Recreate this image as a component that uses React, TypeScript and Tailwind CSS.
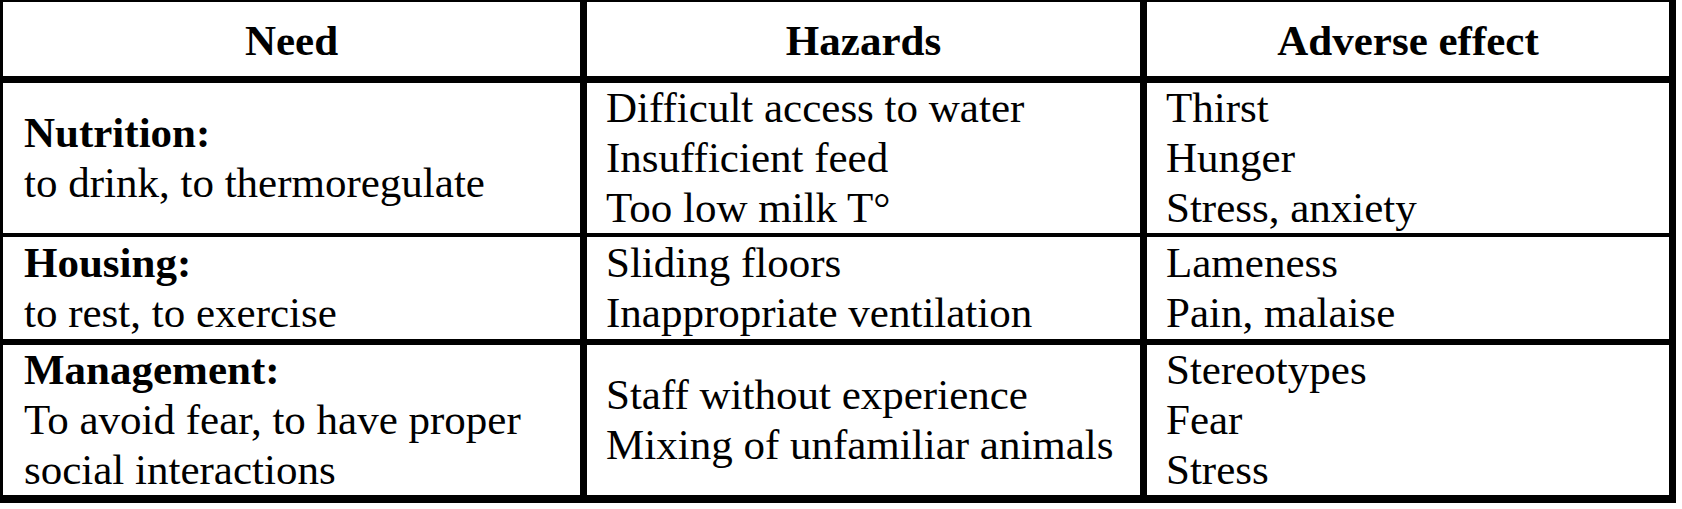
type Row = {
  title: string;
  need: string[];
  hazards: string[];
  effects: string[];
  height: string;
  border: string;
};

const rows: Row[] = [
  {
    title: "Nutrition:",
    need: ["to drink, to thermoregulate"],
    hazards: ["Difficult access to water", "Insufficient feed", "Too low milk T°"],
    effects: ["Thirst", "Hunger", "Stress, anxiety"],
    height: "h-[154px]",
    border: "border-b-[4px]",
  },
  {
    title: "Housing:",
    need: ["to rest, to exercise"],
    hazards: ["Sliding floors", "Inappropriate ventilation"],
    effects: ["Lameness", "Pain, malaise"],
    height: "h-[108px]",
    border: "border-b-[6px]",
  },
  {
    title: "Management:",
    need: ["To avoid fear, to have proper", "social interactions"],
    hazards: ["Staff without experience", "Mixing of unfamiliar animals"],
    effects: ["Stereotypes", "Fear", "Stress"],
    height: "h-[150px]",
    border: "border-b-0",
  },
];

const Lines = ({ items }: { items: string[] }) => (
  <>
    {items.map((t) => (
      <div key={t} className="whitespace-nowrap">
        {t}
      </div>
    ))}
  </>
);

export default function App() {
  return (
    <div className="w-[1682px] h-[509px] bg-white text-black font-[family-name:'Liberation_Serif','Times_New_Roman',serif] text-[43px] leading-[50px]">
      <div className="flex flex-col w-[1676px] border-black border-t-2 border-l-[3px] border-r-[7px] border-b-[8px]">
        {/* header */}
        <div className="flex h-[81px] border-b-[7px] border-black font-bold">
          <div className="w-[584px] border-r-[7px] border-black flex items-center justify-center pt-1">
            Need
          </div>
          <div className="w-[560px] border-r-[7px] border-black flex items-center justify-center pt-1">
            Hazards
          </div>
          <div className="flex-1 flex items-center justify-center pt-1">Adverse effect</div>
        </div>

        {rows.map((r) => (
          <div key={r.title} className={`flex border-black ${r.height} ${r.border}`}>
            <div className="w-[584px] border-r-[7px] border-black flex flex-col justify-center pl-[21px]">
              <div className="font-bold">{r.title}</div>
              <Lines items={r.need} />
            </div>
            <div className="w-[560px] border-r-[7px] border-black flex flex-col justify-center pl-[19px]">
              <Lines items={r.hazards} />
            </div>
            <div className="flex-1 flex flex-col justify-center pl-[19px]">
              <Lines items={r.effects} />
            </div>
          </div>
        ))}
      </div>
    </div>
  );
}
